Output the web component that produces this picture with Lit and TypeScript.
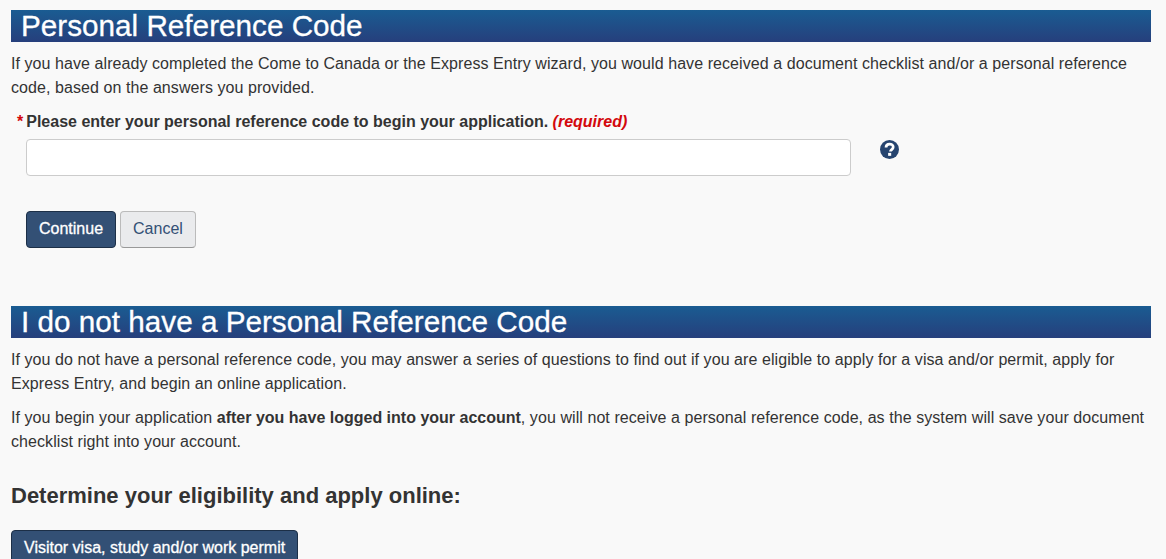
import { css, html, LitElement } from "lit";
import { customElement } from "lit/decorators.js";

@customElement("app-root")
export class AppRoot extends LitElement {
    static styles = css`
        :host {
            display: block;
            height: 559px;
            overflow: hidden;
            background: #f9f9f9;
            color: #333;
            font-family: "Liberation Sans", Arial, sans-serif;
            font-size: 16px;
            line-height: 24px;
        }

        .page {
            padding: 10px 15px 0 11px;
        }

        .bar {
            margin: 0;
            height: 32px;
            padding-left: 10px;
            background: linear-gradient(#1a5c92, #263f7c);
            color: #fff;
            font-size: 29.7px;
            font-weight: 400;
            line-height: 32px;
            -webkit-text-stroke: 0.3px #fff;
        }

        p {
            margin: 0;
            letter-spacing: 0.07px;
        }

        p b {
            letter-spacing: 0;
        }

        .intro {
            margin-top: 10px;
        }

        .label {
            margin: 10px 0 0 6px;
            font-weight: 700;
            display: flex;
            gap: 3px;
        }

        .star,
        .req {
            color: #d3080c;
        }

        .req {
            font-style: italic;
        }

        .field {
            display: flex;
            align-items: flex-start;
            margin: 5px 0 0 15px;
        }

        .input {
            width: 825px;
            height: 37px;
            box-sizing: border-box;
            background: #fff;
            border: 1px solid #ccc;
            border-radius: 4px;
        }

        .help {
            width: 19px;
            height: 19px;
            margin: 1px 0 0 29px;
        }

        .actions {
            display: flex;
            gap: 4px;
            margin: 35px 0 0 15px;
        }

        button {
            box-sizing: border-box;
            height: 37px;
            border-radius: 4px;
            font: inherit;
            padding: 0 12px 2px;
        }

        .primary {
            background: #335075;
            border: 1px solid #1c2f47;
            color: #fff;
            -webkit-text-stroke: 0.3px #fff;
        }

        .secondary {
            background: #eaebed;
            border: 1px solid #bbb;
            border-bottom-color: #999;
            color: #335075;
        }

        .second {
            margin-top: 58px;
        }

        .gap {
            margin-top: 10px;
        }

        h3 {
            margin: 30px 0 0;
            font-size: 22px;
            line-height: 24px;
            font-weight: 700;
        }

        .start {
            margin-top: 22px;
        }
    `;

    render() {
        return html`
            <div class="page">
                <h2 class="bar">Personal Reference Code</h2>
                <p class="intro">If you have already completed the Come to Canada or the Express Entry wizard, you would have received a document checklist and/or a personal reference code, based on the answers you provided.</p>
                <div class="label">
                    <span class="star">*</span>
                    <span>Please enter your personal reference code to begin your application. <span class="req">(required)</span></span>
                </div>
                <div class="field">
                    <div class="input"></div>
                    <svg class="help" viewBox="0 0 18 18">
                        <circle cx="9" cy="9" r="9" fill="#26446f"></circle>
                        <path d="M5.7 7 C5.7 2.8 12.5 2.8 12.5 6.7 C12.5 9.2 9.9 9.1 9.9 11" fill="none" stroke="#fff" stroke-width="2.6"></path>
                        <rect x="7.7" y="12.2" width="2.9" height="2.8" fill="#fff"></rect>
                    </svg>
                </div>
                <div class="actions">
                    <button class="primary">Continue</button>
                    <button class="secondary">Cancel</button>
                </div>
                <h2 class="bar second">I do not have a Personal Reference Code</h2>
                <p class="intro">If you do not have a personal reference code, you may answer a series of questions to find out if you are eligible to apply for a visa and/or permit, apply for Express Entry, and begin an online application.</p>
                <p class="gap">If you begin your application <b>after you have logged into your account</b>, you will not receive a personal reference code, as the system will save your document checklist right into your account.</p>
                <h3>Determine your eligibility and apply online:</h3>
                <div class="start">
                    <button class="primary">Visitor visa, study and/or work permit</button>
                </div>
            </div>
        `;
    }
}
